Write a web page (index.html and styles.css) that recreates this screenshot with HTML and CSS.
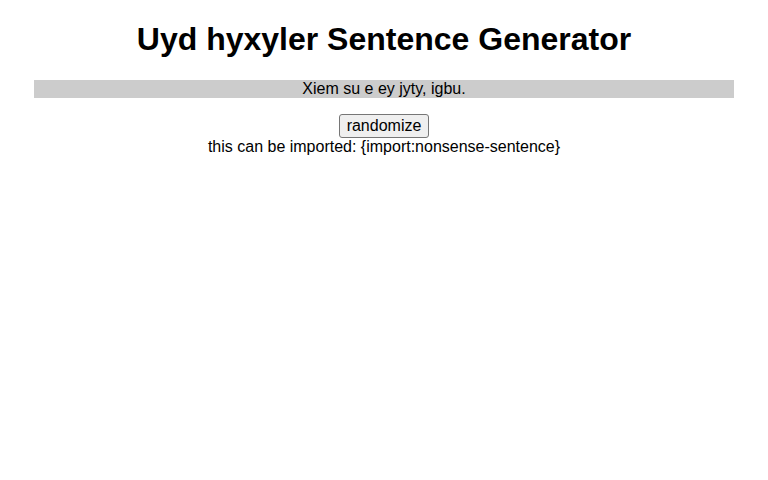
FILE: index.html
```html
<!DOCTYPE html>
<html>
<head>
<meta charset="utf-8">
<link rel="stylesheet" href="styles.css">
</head>
<body>
<h1 class="title">Uyd hyxyler Sentence Generator</h1>
<div class="output">Xiem su e ey jyty, igbu.</div>
<div class="controls">
<button class="btn">randomize</button><br>
<span class="note">this can be imported: {import:nonsense-sentence}</span>
</div>
</body>
</html>
```
FILE: styles.css
```css
body {
  margin: 8px;
  font-family: "Liberation Sans", Arial, sans-serif;
  font-size: 16px;
  color: #000;
  background: #fff;
}
.title {
  font-size: 32px;
  font-weight: bold;
  text-align: center;
  margin: 13px 0 22px;
}
.output {
  max-width: 700px;
  margin: 0 auto;
  background: #cccccc;
  text-align: center;
  line-height: 18px;
}
.controls {
  text-align: center;
  margin-top: 16px;
  line-height: 18px;
}
.btn {
  font-family: "Liberation Sans", Arial, sans-serif;
  font-size: 16px;
  line-height: 18px;
  padding: 2px 7px;
  border: 1px solid #767676;
  border-radius: 3px;
  background: #efefef;
  color: #000;
}
```
